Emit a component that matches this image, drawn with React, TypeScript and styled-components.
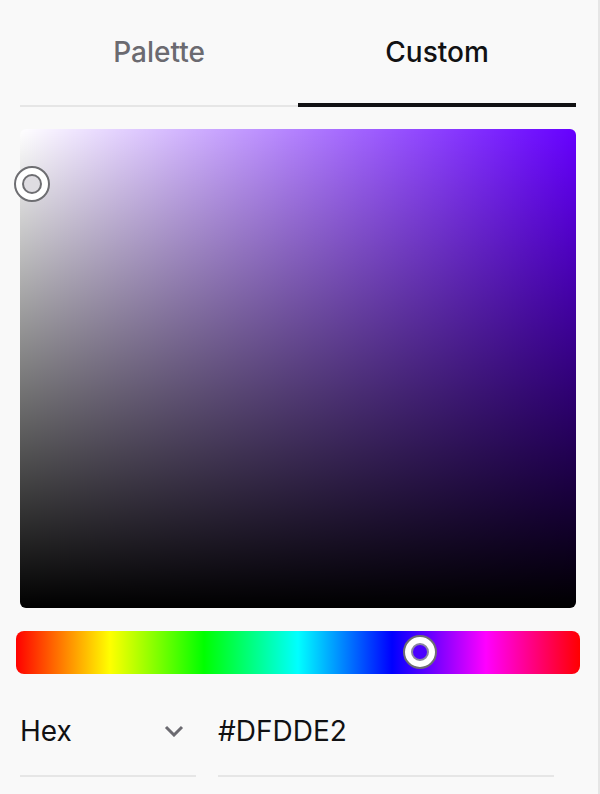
import React, { useState } from 'react'
import styled, { createGlobalStyle } from 'styled-components'

const GlobalStyle = createGlobalStyle`
  html, body {
    margin: 0;
    background: #f9f9f9;
    font-family: Inter, "Noto Sans", "Liberation Sans", sans-serif;
  }
`

const Panel = styled.div`
  box-sizing: border-box;
  width: 600px;
  height: 794px;
  padding: 0 22px 0 20px;
  border-right: 2px solid #e6e6e6;
  display: flex;
  flex-direction: column;
  overflow: hidden;
`

const Tabs = styled.div`
  display: grid;
  grid-template-columns: 1fr 1fr;
`

const Tab = styled.div<{ $active?: boolean }>`
  box-sizing: border-box;
  height: 107px;
  padding-top: 35px;
  border-bottom: ${({ $active }) => ($active ? '4px solid #111113' : '2px solid #e6e6e6')};
  font-size: 28px;
  line-height: 34px;
  font-weight: 500;
  color: ${({ $active }) => ($active ? '#111113' : '#6b6a70')};
  text-align: center;
  cursor: pointer;
  user-select: none;
`

const Field = styled.div<{ $hue: number }>`
  position: relative;
  margin-top: 22px;
  height: 479px;
  border-radius: 6px;
  background:
    linear-gradient(to top, #000, rgba(0, 0, 0, 0)),
    linear-gradient(to right, #fff, rgba(255, 255, 255, 0)),
    hsl(${({ $hue }) => $hue}, 100%, 50%);
`

const Thumb = styled.div<{ $size: number; $inner: number }>`
  position: absolute;
  box-sizing: border-box;
  width: ${({ $size }) => $size}px;
  height: ${({ $size }) => $size}px;
  margin: ${({ $size }) => -$size / 2}px 0 0 ${({ $size }) => -$size / 2}px;
  border-radius: 50%;
  border: 2px solid #6e6e72;
  background: #fff;
  display: flex;
  align-items: center;
  justify-content: center;

  span {
    box-sizing: border-box;
    width: ${({ $inner }) => $inner}px;
    height: ${({ $inner }) => $inner}px;
    border-radius: 50%;
    border: 2px solid #6e6e72;
  }
`

const HueBar = styled.div`
  position: relative;
  margin: 23px -4px 0;
  height: 43px;
  border-radius: 8px;
  background: linear-gradient(
    to right,
    #ff0000 0%,
    #ffff00 16.66%,
    #00ff00 33.33%,
    #00ffff 50%,
    #0000ff 66.66%,
    #ff00ff 83.33%,
    #ff0000 100%
  );
`

const InputRow = styled.div`
  display: grid;
  grid-template-columns: 176px 1fr;
  column-gap: 22px;
  margin-top: 31px;
  padding-right: 22px;
`

const InputBox = styled.div`
  box-sizing: border-box;
  height: 72px;
  border-bottom: 2px solid #e6e6e6;
  display: flex;
  align-items: flex-start;
  justify-content: space-between;
  font-size: 28px;
  line-height: 52px;
  color: #111113;
`

const Chevron = styled.svg`
  margin: 20px 12px 0 0;
`

const hsvToHex = (h: number, s: number, v: number) => {
  const f = (n: number) => {
    const k = (n + h / 60) % 6
    const c = v - v * s * Math.max(0, Math.min(k, 4 - k, 1))
    return Math.round(c * 255).toString(16).padStart(2, '0')
  }
  return ('#' + f(5) + f(3) + f(1)).toUpperCase()
}

export default function App() {
  const [tab, setTab] = useState('custom')
  const hue = 264
  const sat = 0.022
  const val = 0.886
  const hex = hsvToHex(hue, sat, val)
  const fieldW = 556
  const fieldH = 479
  const barW = 564
  const thumb = 34
  const hueLeft = thumb / 2 + (hue / 360) * (barW - thumb) - 2
  const barHue = (hueLeft / barW) * 360

  return (
    <>
      <GlobalStyle />
      <Panel>
        <Tabs>
          <Tab $active={tab === 'palette'} onClick={() => setTab('palette')}>
            Palette
          </Tab>
          <Tab $active={tab === 'custom'} onClick={() => setTab('custom')}>
            Custom
          </Tab>
        </Tabs>
        <Field $hue={hue}>
          <Thumb
            $size={36}
            $inner={20}
            style={{ left: sat * fieldW, top: (1 - val) * fieldH }}
          >
            <span style={{ background: hex }} />
          </Thumb>
        </Field>
        <HueBar>
          <Thumb $size={thumb} $inner={18} style={{ left: hueLeft, top: 21 }}>
            <span style={{ background: `hsl(${barHue}, 100%, 50%)`, borderColor: '#8a86a0' }} />
          </Thumb>
        </HueBar>
        <InputRow>
          <InputBox>
            Hex
            <Chevron width="20" height="12" viewBox="0 0 20 12">
              <path d="M2 2 L10 10 L18 2" fill="none" stroke="#6b6a70" strokeWidth="3" />
            </Chevron>
          </InputBox>
          <InputBox>{hex}</InputBox>
        </InputRow>
      </Panel>
    </>
  )
}
